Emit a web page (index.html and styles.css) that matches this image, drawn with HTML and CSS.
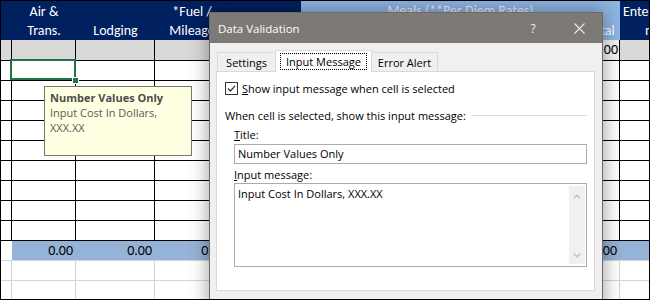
FILE: index.html
```html
<!DOCTYPE html>
<html>
<head>
<meta charset="utf-8">
<link rel="stylesheet" href="styles.css">
</head>
<body>
<div class="sheet">
  <div class="head">
    <div class="hc"></div>
    <div class="hc">Air &amp;<br>Trans.</div>
    <div class="hc">Lodging</div>
    <div class="hc">*Fuel /<br>Mileage</div>
    <div class="hc"></div>
    <div class="meals">Meals (**Per Diem Rates)</div>
    <div class="hc last"><span>Entertain-</span><span class="indent">ment</span></div>
    <div class="sub">Breakfast</div>
    <div class="sub">Lunch</div>
    <div class="sub">Dinner</div>
    <div class="sub">Total</div>
  </div>
  <div class="row gray"><div class="c"></div><div class="c"></div><div class="c"></div><div class="c"></div><div class="c"></div><div class="c"></div><div class="c"></div><div class="c"></div><div class="c tot">0.00</div><div class="c"></div></div>
  <div class="row"><div class="c"></div><div class="c selected"></div><div class="c"></div><div class="c"></div><div class="c"></div><div class="c"></div><div class="c"></div><div class="c"></div><div class="c"></div><div class="c"></div></div>
  <div class="row"><div class="c"></div><div class="c"></div><div class="c"></div><div class="c"></div><div class="c"></div><div class="c"></div><div class="c"></div><div class="c"></div><div class="c"></div><div class="c"></div></div>
  <div class="row"><div class="c"></div><div class="c"></div><div class="c"></div><div class="c"></div><div class="c"></div><div class="c"></div><div class="c"></div><div class="c"></div><div class="c"></div><div class="c"></div></div>
  <div class="row"><div class="c"></div><div class="c"></div><div class="c"></div><div class="c"></div><div class="c"></div><div class="c"></div><div class="c"></div><div class="c"></div><div class="c"></div><div class="c"></div></div>
  <div class="row"><div class="c"></div><div class="c"></div><div class="c"></div><div class="c"></div><div class="c"></div><div class="c"></div><div class="c"></div><div class="c"></div><div class="c"></div><div class="c"></div></div>
  <div class="row"><div class="c"></div><div class="c"></div><div class="c"></div><div class="c"></div><div class="c"></div><div class="c"></div><div class="c"></div><div class="c"></div><div class="c"></div><div class="c"></div></div>
  <div class="row"><div class="c"></div><div class="c"></div><div class="c"></div><div class="c"></div><div class="c"></div><div class="c"></div><div class="c"></div><div class="c"></div><div class="c"></div><div class="c"></div></div>
  <div class="row"><div class="c"></div><div class="c"></div><div class="c"></div><div class="c"></div><div class="c"></div><div class="c"></div><div class="c"></div><div class="c"></div><div class="c"></div><div class="c"></div></div>
  <div class="row"><div class="c"></div><div class="c"></div><div class="c"></div><div class="c"></div><div class="c"></div><div class="c"></div><div class="c"></div><div class="c"></div><div class="c"></div><div class="c"></div></div>
  <div class="row total"><div class="c"></div><div class="c">0.00</div><div class="c">0.00</div><div class="c">0.00</div><div class="c">0.00</div><div class="c">0.00</div><div class="c">0.00</div><div class="c">0.00</div><div class="c">0.00</div><div class="c"></div></div>
  <div class="row light"><div class="c"></div><div class="c"></div><div class="c"></div><div class="c"></div><div class="c"></div><div class="c"></div><div class="c"></div><div class="c"></div><div class="c"></div><div class="c"></div></div>
  <div class="row light end"><div class="c"></div><div class="c"></div><div class="c"></div><div class="c"></div><div class="c"></div><div class="c"></div><div class="c"></div><div class="c"></div><div class="c"></div><div class="c"></div></div>

  <div class="tip"><b>Number Values Only</b>Input Cost In Dollars, XXX.XX</div>

  <div class="dialog">
    <div class="titlebar">
      <span class="dtitle">Data Validation</span>
      <span class="help">?</span>
      <svg class="close" width="11" height="11" viewBox="0 0 11 11"><path d="M0.5 0.5 L10.5 10.5 M10.5 0.5 L0.5 10.5" stroke="#ececec" stroke-width="1.1" fill="none"/></svg>
    </div>
    <div class="dbody">
      <div class="tabs">
        <div class="tab t-set">Settings</div>
        <div class="tab sel"><span class="focus">Input Message</span></div>
        <div class="tab t-err">Error Alert</div>
      </div>
      <div class="panel">
        <div class="chk-row">
          <span class="box"><svg width="11" height="11" viewBox="0 0 11 11"><path d="M2 5.5 L4.4 8 L9.2 2.6" stroke="#333" stroke-width="1.2" fill="none"/></svg></span>
          <span><u>S</u>how input message when cell is selected</span>
        </div>
        <div class="group">When cell is selected, show this input message:</div>
        <div class="flabel"><u>T</u>itle:</div>
        <div class="input">Number Values Only</div>
        <div class="flabel msg"><u>I</u>nput message:</div>
        <div class="ta">
          <div class="ta-text">Input Cost In Dollars, XXX.XX</div>
          <div class="scroll">
            <svg width="8" height="5" viewBox="0 0 8 5"><path d="M0.8 4.3 L4 1.2 L7.2 4.3" stroke="#c2c2c2" stroke-width="1.6" fill="none"/></svg>
            <svg width="8" height="5" viewBox="0 0 8 5"><path d="M0.8 0.7 L4 3.8 L7.2 0.7" stroke="#c2c2c2" stroke-width="1.6" fill="none"/></svg>
          </div>
        </div>
      </div>
    </div>
  </div>
</div>
</body>
</html>
```

FILE: styles.css
```css
* { box-sizing: border-box; }

body {
  margin: 0;
  background: #fff;
}

.sheet {
  position: relative;
  width: 650px;
  height: 300px;
  border: 1px solid #000;
  overflow: hidden;
  font-family: Carlito, Lato, "Liberation Sans", sans-serif;
  font-size: 14px;
  color: #000;
}

.head,
.row {
  display: grid;
  grid-template-columns: 11px 64px 79px 74px 72px 93px 93px 95px 38px 29px;
}

.head {
  grid-template-rows: 20px 19px;
  background: #002060;
}

.hc {
  grid-row: span 2;
  color: #fff;
  display: flex;
  align-items: flex-end;
  justify-content: center;
  text-align: center;
  line-height: 19px;
  white-space: nowrap;
}

.hc.last {
  flex-direction: column;
  align-items: flex-start;
  justify-content: flex-end;
}

.hc.last span { padding-left: 3px; }
.hc.last .indent { padding-left: 25px; }

.meals {
  grid-column: span 4;
  background: #8db4e2;
  color: #e8eef8;
  text-align: center;
  line-height: 20px;
  white-space: nowrap;
}

.sub {
  background: #8db4e2;
  color: #fff;
  text-align: center;
  line-height: 19px;
  white-space: nowrap;
  overflow: hidden;
}

.c {
  height: 20px;
  border-right: 1px solid #000;
  border-bottom: 1px solid #000;
  line-height: 19px;
  text-align: right;
  padding-right: 3px;
  white-space: nowrap;
  overflow: hidden;
}

.c:last-child { border-right: none; }

.row.gray .c {
  height: 21px;
  line-height: 20px;
  background: #d9d9d9;
}

.row.gray .c.tot {
  background: #f2f2f2;
  padding-right: 1px;
}

.c.selected {
  position: relative;
  overflow: visible;
  z-index: 2;
}

.c.selected::after {
  content: "";
  position: absolute;
  left: -2px;
  top: -2px;
  right: -1px;
  bottom: 0;
  border: 2px solid #217346;
}

.c.selected::before {
  content: "";
  position: absolute;
  left: 61px;
  top: 17px;
  width: 5px;
  height: 5px;
  background: #217346;
  box-shadow: 0 0 0 1px #fff;
  z-index: 1;
}

.row.total .c {
  background: #95b3d7;
  border-right: none;
  border-bottom: 1px solid #d4d4d4;
}

.row.total .c:first-child { background: #fff; }

.row.light .c { border-color: #d4d4d4; }

.row.end .c {
  height: 18px;
  border-bottom: none;
}

/* tooltip */
.tip {
  position: absolute;
  left: 43px;
  top: 85px;
  width: 148px;
  height: 70px;
  border: 1px solid #767676;
  background: #ffffe1;
  padding: 3px 5px;
  font-family: "Segoe UI", "Open Sans", sans-serif;
  font-size: 11px;
  line-height: 15px;
  color: #5a5a5a;
}

.tip b {
  display: block;
  color: #4d4d4d;
}

/* dialog */
.dialog {
  position: absolute;
  left: 208px;
  top: 11px;
  width: 394px;
  height: 300px;
  border: 1px solid #6e6a66;
  background: #f0f0f0;
  box-shadow: 0 0 18px rgba(0, 0, 0, 0.4);
  font-family: "Segoe UI", "Open Sans", sans-serif;
  font-size: 11px;
  color: #000;
}

.titlebar {
  height: 30px;
  background: #7d7974;
  display: flex;
  align-items: center;
  padding: 0 17px 0 8px;
  color: #fff;
  font-size: 11.5px;
}

.help {
  margin-left: auto;
  width: 12px;
  text-align: center;
  color: #ececec;
  font-size: 12px;
}

.close {
  margin-left: 35px;
  display: block;
}

.dbody {
  padding: 7px 7px 0 6px;
}

.tabs {
  display: flex;
  align-items: flex-end;
  height: 21px;
  padding-left: 1px;
}

.tab {
  height: 19px;
  border: 1px solid #d9d9d9;
  border-bottom: none;
  background: #f0f0f0;
  display: flex;
  align-items: center;
  justify-content: center;
  white-space: nowrap;
}

.tab + .tab { margin-left: -1px; }
.tab.t-set { width: 59px; }
.tab.t-err { width: 67px; }

.tab.sel {
  width: 97px;
  height: 22px;
  margin-bottom: -1px;
  background: #fff;
  position: relative;
  z-index: 1;
}

.focus {
  outline: 1px dotted #000;
  padding: 0 5px;
  line-height: 15px;
}

.panel {
  height: 220px;
  border: 1px solid #d9d9d9;
  background: #fff;
  padding: 0 7px 0 8px;
}

.chk-row {
  display: flex;
  align-items: center;
  gap: 4px;
  margin-top: 9px;
  height: 15px;
  white-space: nowrap;
}

.box {
  width: 13px;
  height: 13px;
  border: 1px solid #333;
  flex: none;
}

.box svg { display: block; }

.group {
  display: flex;
  align-items: center;
  margin-top: 11px;
  height: 16px;
  white-space: nowrap;
}

.group::after {
  content: "";
  flex: 1;
  border-top: 1px solid #dcdcdc;
  margin-left: 5px;
}

.flabel {
  margin-left: 9px;
  margin-top: 4px;
  height: 16px;
  line-height: 16px;
}

.flabel.msg { margin-top: 3px; }

.input {
  margin-left: 9px;
  margin-top: 1px;
  height: 20px;
  border: 1px solid #ababab;
  padding: 0 3px;
  line-height: 18px;
}

.ta {
  margin-left: 9px;
  height: 84px;
  border: 1px solid #ababab;
  display: flex;
  padding: 2px 1px 2px 0;
}

.ta-text {
  flex: 1;
  padding: 0 3px;
  line-height: 16px;
}

.scroll {
  width: 16px;
  background: #f0f0f0;
  display: flex;
  flex-direction: column;
  justify-content: space-between;
  align-items: center;
  padding: 8px 0 6px;
}

.scroll svg { display: block; }
```
